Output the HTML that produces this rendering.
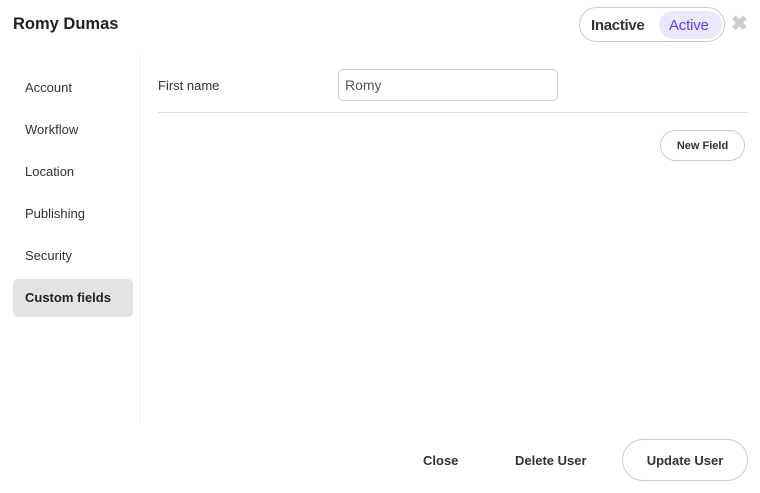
<!DOCTYPE html>
<html><head><style>
*{margin:0;padding:0;box-sizing:border-box}
body{width:760px;height:493px;background:#fff;font-family:"Liberation Sans",sans-serif;color:#2a2a33;position:relative;overflow:hidden}
.a{position:absolute}
.nav{font-size:13px;color:#333}
</style></head><body>
<div class="a" style="left:13px;top:15px;font-size:16.5px;color:#222;font-weight:bold">Romy Dumas</div>
<div class="a" style="left:579px;top:7px;width:146px;height:35px;border:1px solid #ccc;border-radius:18px"></div>
<div class="a" style="left:659px;top:11px;width:63px;height:28px;background:#ebe8fd;border-radius:14px"></div>
<div class="a" style="left:591px;top:17px;font-size:15px;color:#333;font-weight:bold;letter-spacing:-0.3px">Inactive</div>
<div class="a" style="left:669px;top:17px;font-size:15px;color:#5b3ff5;letter-spacing:-0.2px">Active</div>
<div class="a" style="left:731px;top:11px;font-size:20px;color:#ccc;font-weight:bold">✖</div>
<div class="a" style="left:139px;top:55px;width:1px;height:368px;background:#eee"></div>
<div class="a nav" style="left:25px;top:80px">Account</div>
<div class="a nav" style="left:25px;top:122px">Workflow</div>
<div class="a nav" style="left:25px;top:164px">Location</div>
<div class="a nav" style="left:25px;top:206px">Publishing</div>
<div class="a nav" style="left:25px;top:248px">Security</div>
<div class="a" style="left:13px;top:279px;width:120px;height:38px;background:#e3e3e5;border-radius:5px"></div>
<div class="a nav" style="left:25px;top:290px;font-weight:bold;color:#222">Custom fields</div>
<div class="a nav" style="left:158px;top:78px">First name</div>
<div class="a" style="left:338px;top:69px;width:220px;height:32px;border:1px solid #ccc;border-radius:5px;font-size:14px;color:#555;padding:7px 6px">Romy</div>
<div class="a" style="left:158px;top:112px;width:590px;height:1px;background:#ddd"></div>
<div class="a" style="left:660px;top:130px;width:85px;height:31px;border:1px solid #ccc;border-radius:16px;font-size:11px;font-weight:bold;text-align:center;line-height:31px;color:#333">New Field</div>
<div class="a" style="left:423px;top:453px;font-size:13px;font-weight:bold;color:#333">Close</div>
<div class="a" style="left:515px;top:453px;font-size:13px;font-weight:bold;color:#333">Delete User</div>
<div class="a" style="left:622px;top:439px;width:126px;height:42px;border:1px solid #ccc;border-radius:21px;font-size:13px;font-weight:bold;text-align:center;line-height:42px;color:#333">Update User</div>
</body></html>
